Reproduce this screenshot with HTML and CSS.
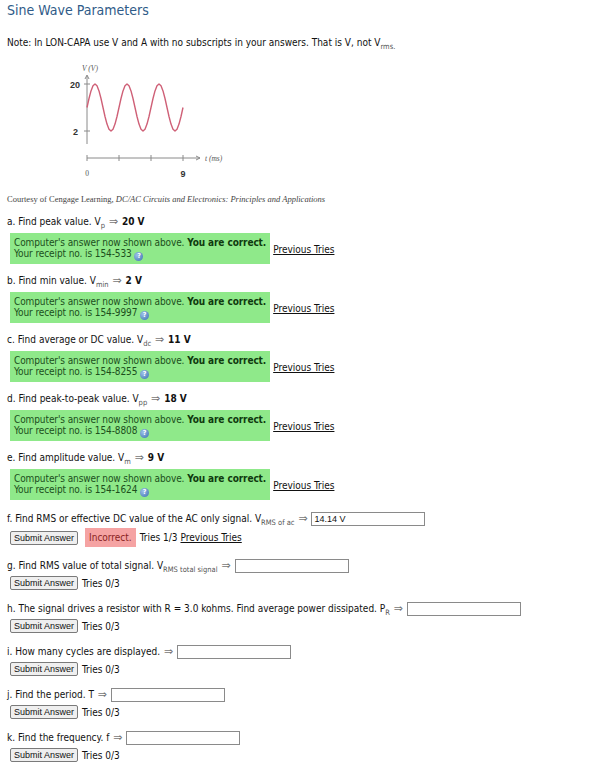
FILE: index.html
```html
<!DOCTYPE html>
<html>
<head>
<meta charset="utf-8">
<link rel="stylesheet" href="styles.css">
</head>
<body>
<div class="page">
  <h1 class="title">Sine Wave Parameters</h1>
  <p class="note">Note: In LON-CAPA use V and A with no subscripts in your answers. That is V, not V<sub>rms.</sub></p>

  <div class="figure">
    <svg width="250" height="125" viewBox="7 60 250 125" xmlns="http://www.w3.org/2000/svg">
      <g stroke="#8a8a8a" stroke-width="1" fill="none">
        <line x1="94" y1="76" x2="94" y2="144"/>
        <line x1="91" y1="84" x2="97" y2="84"/>
        <line x1="91" y1="131" x2="97" y2="131"/>
        <line x1="94" y1="158" x2="207" y2="158"/>
        <line x1="94" y1="155" x2="94" y2="161"/>
        <line x1="126" y1="155" x2="126" y2="161"/>
        <line x1="158" y1="155" x2="158" y2="161"/>
        <line x1="190" y1="155" x2="190" y2="161"/>
        <polyline points="92,79 94,75 96,79"/>
        <polyline points="203,156 207,158 203,160"/>
      </g>
      <polyline fill="none" stroke="#cf6077" stroke-width="1.4" stroke-linejoin="round"
        points="94,107.5 96,98.5 98,90.9 100,85.8 102,84 104,85.8 106,90.9 108,98.5 110,107.5 112,116.5 114,124.1 116,129.2 118,131 120,129.2 122,124.1 124,116.5 126,107.5 128,98.5 130,90.9 132,85.8 134,84 136,85.8 138,90.9 140,98.5 142,107.5 144,116.5 146,124.1 148,129.2 150,131 152,129.2 154,124.1 156,116.5 158,107.5 160,98.5 162,90.9 164,85.8 166,84 168,85.8 170,90.9 172,98.5 174,107.5 176,116.5 178,124.1 180,129.2 182,131 184,129.2 186,124.1 188,116.5 190,107.5"/>
      <text class="ax-it" x="89" y="71">V (V)</text>
      <text class="ax-num" x="87" y="88" text-anchor="end">20</text>
      <text class="ax-num" x="85" y="135" text-anchor="end">2</text>
      <text class="ax-it" x="212" y="161">t (ms)</text>
      <text class="ax-small" x="94" y="176" text-anchor="middle">0</text>
      <text class="ax-num" x="190" y="177" text-anchor="middle">9</text>
    </svg>
  </div>

  <p class="credit">Courtesy of Cengage Learning, <i>DC/AC Circuits and Electronics: Principles and Applications</i></p>

  <div class="part">
    <div class="q">a. Find peak value. V<sub>p</sub> <span class="arr">⇒</span> <b>20 V</b></div>
    <div class="result">
      <div class="ok">Computer's answer now shown above. <b>You are correct.</b><br>Your receipt no. is 154-533 <span class="help">?</span></div>
      <a class="prev" href="#">Previous Tries</a>
    </div>
  </div>

  <div class="part">
    <div class="q">b. Find min value. V<sub>min</sub> <span class="arr">⇒</span> <b>2 V</b></div>
    <div class="result">
      <div class="ok">Computer's answer now shown above. <b>You are correct.</b><br>Your receipt no. is 154-9997 <span class="help">?</span></div>
      <a class="prev" href="#">Previous Tries</a>
    </div>
  </div>

  <div class="part">
    <div class="q">c. Find average or DC value. V<sub>dc</sub> <span class="arr">⇒</span> <b>11 V</b></div>
    <div class="result">
      <div class="ok">Computer's answer now shown above. <b>You are correct.</b><br>Your receipt no. is 154-8255 <span class="help">?</span></div>
      <a class="prev" href="#">Previous Tries</a>
    </div>
  </div>

  <div class="part">
    <div class="q">d. Find peak-to-peak value. V<sub>pp</sub> <span class="arr">⇒</span> <b>18 V</b></div>
    <div class="result">
      <div class="ok">Computer's answer now shown above. <b>You are correct.</b><br>Your receipt no. is 154-8808 <span class="help">?</span></div>
      <a class="prev" href="#">Previous Tries</a>
    </div>
  </div>

  <div class="part">
    <div class="q">e. Find amplitude value. V<sub>m</sub> <span class="arr">⇒</span> <b>9 V</b></div>
    <div class="result">
      <div class="ok">Computer's answer now shown above. <b>You are correct.</b><br>Your receipt no. is 154-1624 <span class="help">?</span></div>
      <a class="prev" href="#">Previous Tries</a>
    </div>
  </div>

  <div class="ask first">
    <div class="q">f. Find RMS or effective DC value of the AC only signal. V<sub>RMS of ac</sub> <span class="arr">⇒</span> <input class="field" type="text" value="14.14 V"></div>
    <div class="actions tall">
      <button class="submit">Submit Answer</button>
      <span class="bad">Incorrect.</span>
      <span class="tries">Tries 1/3</span>
      <a class="prev inline" href="#">Previous Tries</a>
    </div>
  </div>

  <div class="ask">
    <div class="q">g. Find RMS value of total signal. V<sub>RMS total signal</sub> <span class="arr">⇒</span> <input class="field" type="text"></div>
    <div class="actions"><button class="submit">Submit Answer</button><span class="tries">Tries 0/3</span></div>
  </div>

  <div class="ask">
    <div class="q">h. The signal drives a resistor with R = 3.0 kohms. Find average power dissipated. P<sub>R</sub> <span class="arr">⇒</span> <input class="field" type="text"></div>
    <div class="actions"><button class="submit">Submit Answer</button><span class="tries">Tries 0/3</span></div>
  </div>

  <div class="ask">
    <div class="q">i. How many cycles are displayed. <span class="arr">⇒</span> <input class="field" type="text"></div>
    <div class="actions"><button class="submit">Submit Answer</button><span class="tries">Tries 0/3</span></div>
  </div>

  <div class="ask">
    <div class="q">j. Find the period. T <span class="arr">⇒</span> <input class="field" type="text"></div>
    <div class="actions"><button class="submit">Submit Answer</button><span class="tries">Tries 0/3</span></div>
  </div>

  <div class="ask">
    <div class="q">k. Find the frequency. f <span class="arr">⇒</span> <input class="field" type="text"></div>
    <div class="actions"><button class="submit">Submit Answer</button><span class="tries">Tries 0/3</span></div>
  </div>

  <div class="rule"></div>
</div>
</body>
</html>
```

FILE: styles.css
```css
html, body {
  margin: 0;
  padding: 0;
  background: #ffffff;
}

body {
  font-family: Tahoma, "DejaVu Sans Condensed", "DejaVu Sans", sans-serif;
  font-size: 10px;
  color: #111;
}

.page {
  padding: 0 0 0 7px;
}

.title {
  margin: 0;
  font-size: 14px;
  line-height: 20px;
  font-weight: normal;
  color: #2f5b88;
}

.note {
  margin: 16px 0 0 0;
  line-height: 14px;
  height: 14px;
}

sub {
  font-size: 7.5px;
  vertical-align: -3px;
  line-height: 0;
  color: #555;
}

.figure {
  margin: 10px 0 0 -7px;
  height: 125px;
}

.figure svg {
  display: block;
}

.ax-it {
  font-family: "Liberation Serif", serif;
  font-style: italic;
  font-size: 7.5px;
  fill: #555;
}

.ax-num {
  font-family: "Liberation Sans", sans-serif;
  font-weight: bold;
  font-size: 9px;
  fill: #333;
}

.ax-small {
  font-family: "Liberation Serif", serif;
  font-size: 7.5px;
  fill: #555;
}

.credit {
  margin: 8px 0 0 0;
  font-family: "Liberation Serif", serif;
  font-size: 8.5px;
  line-height: 12px;
  height: 12px;
  color: #444;
}

.part {
  margin-top: 10px;
}

.credit + .part {
  margin-top: 10px;
}

.q {
  line-height: 14px;
  height: 14px;
  white-space: nowrap;
}

.arr {
  color: #777;
  font-family: "DejaVu Sans", sans-serif;
  font-size: 11px;
  margin: 0 1px;
}

.q b {
  font-weight: bold;
}

.result {
  margin: 4px 0 0 3px;
  display: flex;
  align-items: center;
}

.ok {
  height: 31px;
  box-sizing: border-box;
  padding: 4px 4px 0 4px;
  background: #8fe98a;
  color: #1c4f1c;
  line-height: 11px;
  white-space: nowrap;
  letter-spacing: -0.1px;
}

.ok b {
  color: #0f3a0f;
}

.help {
  display: inline-block;
  width: 9px;
  height: 9px;
  border-radius: 50%;
  background: radial-gradient(circle at 35% 35%, #9cc0e8, #3a6fb0);
  color: #fff;
  font-size: 7px;
  line-height: 9px;
  text-align: center;
  vertical-align: -1px;
  font-weight: bold;
}

.prev {
  color: #111;
  text-decoration: underline;
  margin: 2px 0 0 3px;
}

.prev.inline {
  margin: 0 0 0 3px;
}

.ask {
  margin-top: 12px;
}

.field {
  width: 114px;
  height: 14px;
  box-sizing: border-box;
  border: 1px solid #8a8a8a;
  padding: 0 2px;
  margin: 0;
  vertical-align: middle;
  font-family: "Liberation Sans", sans-serif;
  font-size: 9px;
  color: #111;
  background: #fff;
}

.actions {
  margin: 3px 0 0 3px;
  display: flex;
  align-items: center;
  height: 14px;
}

.actions.tall {
  margin-top: 2px;
  height: 19px;
}

.submit {
  height: 14px;
  box-sizing: border-box;
  margin: 0;
  padding: 0 3px;
  border: 1px solid #7a7a7a;
  border-radius: 2px;
  background: #efefef;
  font-family: "Liberation Sans", sans-serif;
  font-size: 9px;
  line-height: 12px;
  color: #111;
}

.bad {
  margin-left: 7px;
  height: 19px;
  padding: 0 4px;
  background: #f5a3a3;
  color: #8a1f1f;
  line-height: 19px;
}

.tries {
  margin-left: 4px;
}

.rule {
  margin-top: 8px;
  height: 2px;
  background: #a08a52;
}
```
